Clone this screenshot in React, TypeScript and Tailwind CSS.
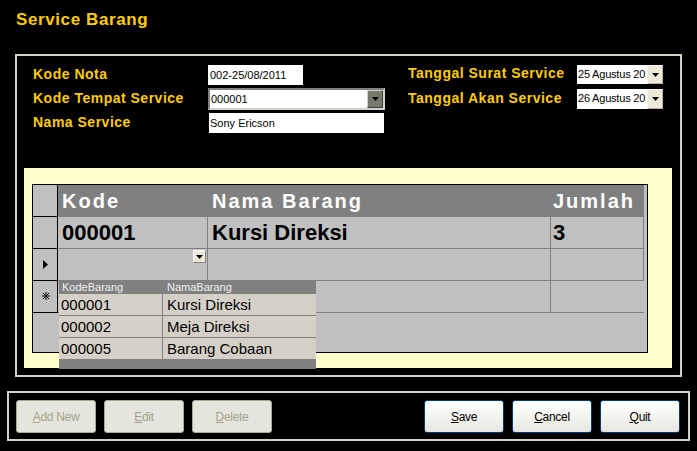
import React from "react";

// small black arrow used in combo / date picker buttons
function DownArrow() {
  return (
    <svg width="7" height="4" viewBox="0 0 7 4">
      <polygon points="0,0 7,0 3.5,4" fill="#000" />
    </svg>
  );
}

function Label({ children, w }: { children: React.ReactNode; w: string }) {
  return (
    <div className={`${w} pb-[3px] text-[14px] leading-[16px] font-bold tracking-[0.5px] text-[#FFCC00] whitespace-nowrap`}>
      {children}
    </div>
  );
}

function DatePicker({ value, h }: { value: string; h: string }) {
  return (
    <div className={`w-[86px] ${h} bg-white flex`}>
      <div className="flex-1 whitespace-nowrap text-[11px] leading-[19px] tracking-[-0.2px] pl-[1px] text-black">{value}</div>
      <div className="w-[16px] bg-[#ECE9D8] border border-[#F8F7F2] border-r-[#B5B2A5] border-b-[#B5B2A5] flex items-center justify-center">
        <DownArrow />
      </div>
    </div>
  );
}

function BottomButton({ first, rest, disabled }: { first: string; rest: string; disabled?: boolean }) {
  return disabled ? (
    <button className="w-[80px] h-[33px] rounded-[3px] border border-[#A9A992] bg-[#E5E5DE] text-[12px] tracking-[-0.3px] text-[#A3A38C]">
      <span className="underline">{first}</span>
      {rest}
    </button>
  ) : (
    <button className="w-[80px] h-[33px] rounded-[3px] border border-[#003C74] bg-gradient-to-b from-white to-[#E8E7E0] text-[12px] tracking-[-0.3px] text-black">
      <span className="underline">{first}</span>
      {rest}
    </button>
  );
}

export default function App() {
  const listItems = [
    ["000001", "Kursi Direksi"],
    ["000002", "Meja Direksi"],
    ["000005", "Barang Cobaan"],
  ];

  return (
    <div className="w-[697px] h-[451px] bg-black overflow-hidden font-['Liberation_Sans',Arial,sans-serif]">
      {/* Title */}
      <div className="h-[54px] pl-[16px] pt-[10px]">
        <h1 className="text-[17px] leading-[20px] font-bold tracking-[0.6px] text-[#FFCC00]">Service Barang</h1>
      </div>

      {/* Main panel */}
      <div className="ml-[15px] w-[667px] h-[323px] border-2 border-[#D4D0C8]">
        <div className="h-[112px] flex">
          <div className="w-[368px] pl-[16px] pt-[9px] flex flex-col gap-[3px]">
            <div className="flex items-center h-[20px]">
              <Label w="w-[175px]">Kode Nota</Label>
              <div className="w-[95px] h-[20px] bg-white text-[11px] leading-[20px] pl-[2px] text-black">002-25/08/2011</div>
            </div>
            <div className="flex items-center h-[22px]">
              <Label w="w-[175px]">Kode Tempat Service</Label>
              <div className="w-[177px] h-[22px] bg-white flex border-2 border-[#808080] border-r-[#D4D0C8] border-b-[#D4D0C8]">
                <div className="flex-1 text-[11px] leading-[18px] pl-[1px] text-black">000001</div>
                <div className="w-[16px] bg-[#77776B] border border-[#D4D0C8] border-r-[#404040] border-b-[#404040] flex items-center justify-center">
                  <DownArrow />
                </div>
              </div>
            </div>
            <div className="flex items-center h-[20px]">
              <Label w="w-[176px]">Nama Service</Label>
              <div className="w-[175px] h-[20px] bg-white text-[11px] leading-[20px] pl-[1px] text-black">Sony Ericson</div>
            </div>
          </div>
          <div className="pl-[23px] pt-[9px] flex flex-col gap-[5px]">
            <div className="flex items-center">
              <Label w="w-[169px]">Tanggal Surat Service</Label>
              <DatePicker value="25 Agustus 20" h="h-[19px]" />
            </div>
            <div className="flex items-center">
              <Label w="w-[169px]">Tanggal Akan Service</Label>
              <DatePicker value="26 Agustus 20" h="h-[20px]" />
            </div>
          </div>
        </div>

        {/* Yellow detail area */}
        <div className="ml-[7px] w-[648px] h-[200px] bg-[#FFFFCC] pt-[16px] pl-[8px]">
          <div className="relative w-[616px] h-[169px] border border-black bg-[#C0C0C0] flex">
            {/* record selectors */}
            <div className="w-[25px] flex flex-col">
              <div className="h-[32px] border-r border-b border-black" />
              <div className="h-[32px] border-r border-b border-black" />
              <div className="h-[32px] border-r border-b border-black flex items-center pl-[10px]">
                <svg width="5" height="9" viewBox="0 0 5 9">
                  <polygon points="0,0 5,4.5 0,9" fill="#000" />
                </svg>
              </div>
              <div className="h-[32px] border-r border-b border-black flex items-start pt-[11px] pl-[9px]">
                <svg width="8" height="8" viewBox="0 0 8 8" stroke="#000" strokeWidth="1">
                  <line x1="4" y1="0" x2="4" y2="8" />
                  <line x1="0" y1="4" x2="8" y2="4" />
                  <line x1="1" y1="1" x2="7" y2="7" />
                  <line x1="7" y1="1" x2="1" y2="7" />
                </svg>
              </div>
            </div>

            <div className="flex flex-col">
              <div className="flex h-[32px] bg-[#808080] text-white text-[20px] leading-[32px] font-bold tracking-[2px]">
                <div className="w-[150px] pl-[4px]">Kode</div>
                <div className="w-[343px] pl-[4px]">Nama Barang</div>
                <div className="w-[93px] pl-[2px]">Jumlah</div>
              </div>
              <div className="flex h-[32px] border-b border-[#808080] text-black text-[22px] leading-[31px] font-bold">
                <div className="w-[150px] pl-[4px] border-r border-[#808080]">000001</div>
                <div className="w-[343px] pl-[4px] border-r border-[#808080]">Kursi Direksi</div>
                <div className="w-[93px] pl-[2px] border-r border-[#808080]">3</div>
              </div>
              <div className="flex h-[32px] border-b border-[#808080]">
                <div className="w-[150px] border-r border-[#808080] flex justify-end items-start pt-[1px] pr-[1px]">
                  <div className="w-[13px] h-[13px] bg-[#ECE9D8] border border-white border-r-[#808080] border-b-[#808080] flex items-center justify-center">
                    <DownArrow />
                  </div>
                </div>
                <div className="w-[343px] border-r border-[#808080]" />
                <div className="w-[93px] border-r border-[#808080]" />
              </div>
              <div className="flex h-[32px] border-b border-[#808080]">
                <div className="w-[150px] border-r border-[#808080]" />
                <div className="w-[343px] border-r border-[#808080]" />
                <div className="w-[93px]" />
              </div>
            </div>

            {/* open combo list */}
            <div className="absolute left-[26px] top-[95px] w-[257px] h-[89px] bg-[#D4D0C8] flex flex-col">
              <div className="flex h-[14px] bg-[#808080] text-[#F0F0F0] text-[11px] leading-[14px]">
                <div className="w-[104px] pl-[3px]">KodeBarang</div>
                <div className="flex-1 pl-[4px]">NamaBarang</div>
              </div>
              {listItems.map(([kode, nama]) => (
                <div key={kode} className="flex h-[22px] border-b border-[#808080] text-black text-[15px] leading-[21px]">
                  <div className="w-[104px] pl-[2px] border-r border-[#808080]">{kode}</div>
                  <div className="flex-1 pl-[4px]">{nama}</div>
                </div>
              ))}
              <div className="flex-1 bg-[#808080]" />
            </div>
          </div>
        </div>
      </div>

      {/* Command buttons */}
      <div className="mt-[14px] ml-[7px] w-[683px] h-[50px] border-2 border-[#D4D0C8] flex justify-between pl-[7px] pr-[8px] pt-[7px]">
        <div className="flex gap-[8px]">
          <BottomButton first="A" rest="dd New" disabled />
          <BottomButton first="E" rest="dit" disabled />
          <BottomButton first="D" rest="elete" disabled />
        </div>
        <div className="flex gap-[8px]">
          <BottomButton first="S" rest="ave" />
          <BottomButton first="C" rest="ancel" />
          <BottomButton first="Q" rest="uit" />
        </div>
      </div>
    </div>
  );
}
